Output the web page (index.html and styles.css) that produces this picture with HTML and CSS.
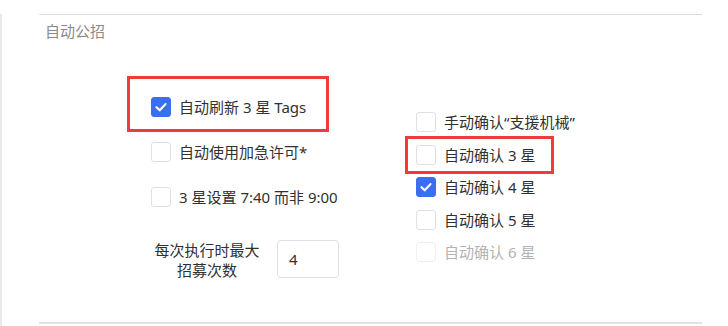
FILE: index.html
```html
<!DOCTYPE html>
<html lang="zh-CN">
<head>
<meta charset="utf-8">
<link rel="stylesheet" href="styles.css">
</head>
<body>
<div class="page">
  <section class="section">
    <div class="title">自动公招</div>
    <div class="body">
      <div class="col-left">
        <label class="check"><span class="box checked"><svg viewBox="0 0 20 20"><path d="M5 10.2 L8.6 13.6 L15 6.8"/></svg></span><span class="txt">自动刷新 3 星 Tags</span></label>
        <label class="check"><span class="box"></span><span class="txt">自动使用加急许可*</span></label>
        <label class="check"><span class="box"></span><span class="txt">3 星设置 7:40 而非 9:00</span></label>
        <div class="field">
          <div class="field-label">每次执行时最大<br>招募次数</div>
          <div class="input">4</div>
        </div>
      </div>
      <div class="col-right">
        <label class="check"><span class="box"></span><span class="txt">手动确认“支援机械”</span></label>
        <label class="check"><span class="box"></span><span class="txt">自动确认 3 星</span></label>
        <label class="check"><span class="box checked"><svg viewBox="0 0 20 20"><path d="M5 10.2 L8.6 13.6 L15 6.8"/></svg></span><span class="txt">自动确认 4 星</span></label>
        <label class="check"><span class="box"></span><span class="txt">自动确认 5 星</span></label>
        <label class="check disabled"><span class="box"></span><span class="txt">自动确认 6 星</span></label>
      </div>
    </div>
    <div class="mark mark-a"></div>
    <div class="mark mark-b"></div>
  </section>
</div>
</body>
</html>
```
FILE: styles.css
```css
* { box-sizing: border-box; }
html, body { margin: 0; padding: 0; background: #fff; }
body {
  font-family: "Noto Sans", "Noto Sans CJK SC", sans-serif;
  font-size: 15px;
  line-height: 20px;
  color: #303133;
}
.page {
  margin-top: 14px;
  height: 312px;
  border-left: 2px solid #e9e9e9;
  padding-left: 37px;
}
.section {
  position: relative;
  width: 663px;
  border-top: 1px solid #dcdcdc;
  border-bottom: 2px solid #e2e2e2;
  padding-bottom: 42px;
}
.title {
  padding: 6px 0 0 6px;
  color: #8a8a8a;
  font-size: 15px;
  line-height: 20px;
}
.body {
  display: flex;
  align-items: flex-start;
}
.col-left {
  width: 377px;
  padding-left: 112px;
  padding-top: 56px;
  display: flex;
  flex-direction: column;
  gap: 25px;
}
.col-right {
  padding-top: 71px;
  display: flex;
  flex-direction: column;
  gap: 12.5px;
}
.check {
  display: flex;
  align-items: center;
  gap: 8px;
  height: 20px;
  white-space: nowrap;
}
.box {
  width: 20px;
  height: 20px;
  flex: none;
  border: 1px solid #dcdfe6;
  border-radius: 3px;
  background: #fff;
  display: flex;
}
.box svg { width: 18px; height: 18px; }
.box svg path {
  fill: none;
  stroke: #fff;
  stroke-width: 2.4;
  stroke-linecap: round;
  stroke-linejoin: round;
}
.box.checked {
  background: #3c6ff0;
  border-color: #3c6ff0;
}
.disabled .box { border-color: #eef0f3; }
.disabled .txt { color: #b3b3b3; }
.field {
  display: flex;
  align-items: flex-start;
  margin-top: 8px;
}
.field-label {
  width: 112px;
  text-align: center;
  line-height: 20px;
}
.input {
  margin-left: 14px;
  width: 62px;
  height: 38px;
  border: 1px solid #dcdfe6;
  border-radius: 4px;
  padding-left: 11px;
  line-height: 36px;
}
.mark {
  position: absolute;
  border: 3px solid #f03b3b;
}
.mark-a { left: 88px; top: 61px; width: 202px; height: 56px; }
.mark-b { left: 366px; top: 121px; width: 149px; height: 38px; }
```
